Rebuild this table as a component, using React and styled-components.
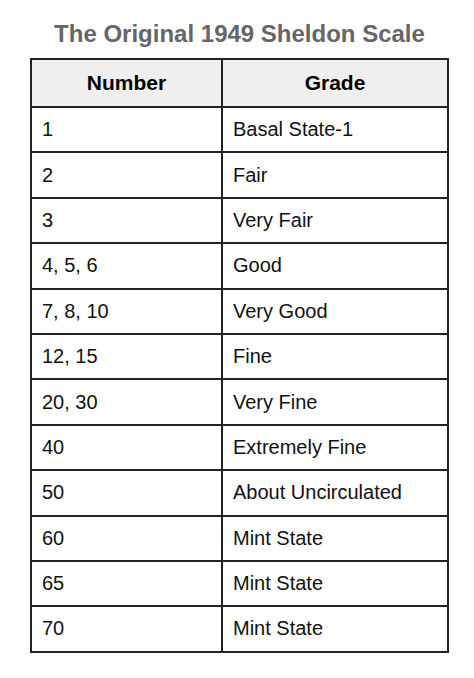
import React from 'react';
import styled, { createGlobalStyle } from 'styled-components';

const GlobalStyle = createGlobalStyle`
    body {
        margin: 0;
        background: #fff;
        font-family: "Liberation Sans", Arial, sans-serif;
    }
`

const Page = styled.div`
    width: 474px;
    height: 678px;
    padding: 20px 0 0 30px;
    box-sizing: border-box;
`

const Title = styled.h2`
    margin: 0 0 10px 0;
    width: 419px;
    text-align: center;
    font-size: 24px;
    line-height: 28px;
    font-weight: bold;
    color: #666;
`

const Table = styled.table`
    width: 419px;
    border-collapse: collapse;
    border: 2px solid #222;
`

const HeadCell = styled.th`
    height: 46px;
    padding: 0;
    background: #efefef;
    border: 2px solid #222;
    font-size: 21px;
    font-weight: bold;
    color: #000;
    text-align: center;
    width: ${props => props.w};
`

const Cell = styled.td`
    height: 43.4px;
    padding: 0 0 0 10px;
    border: 2px solid #222;
    font-size: 20px;
    color: #111;
`

const rows = [
    ['1', 'Basal State-1'],
    ['2', 'Fair'],
    ['3', 'Very Fair'],
    ['4, 5, 6', 'Good'],
    ['7, 8, 10', 'Very Good'],
    ['12, 15', 'Fine'],
    ['20, 30', 'Very Fine'],
    ['40', 'Extremely Fine'],
    ['50', 'About Uncirculated'],
    ['60', 'Mint State'],
    ['65', 'Mint State'],
    ['70', 'Mint State']
]

export default function App() {
    return (
        <Page>
            <GlobalStyle />
            <Title>The Original 1949 Sheldon Scale</Title>
            <Table>
                <thead>
                    <tr>
                        <HeadCell w="189px">Number</HeadCell>
                        <HeadCell>Grade</HeadCell>
                    </tr>
                </thead>
                <tbody>
                    {rows.map(([num, grade], i) => (
                        <tr key={i}>
                            <Cell>{num}</Cell>
                            <Cell>{grade}</Cell>
                        </tr>
                    ))}
                </tbody>
            </Table>
        </Page>
    );
}
